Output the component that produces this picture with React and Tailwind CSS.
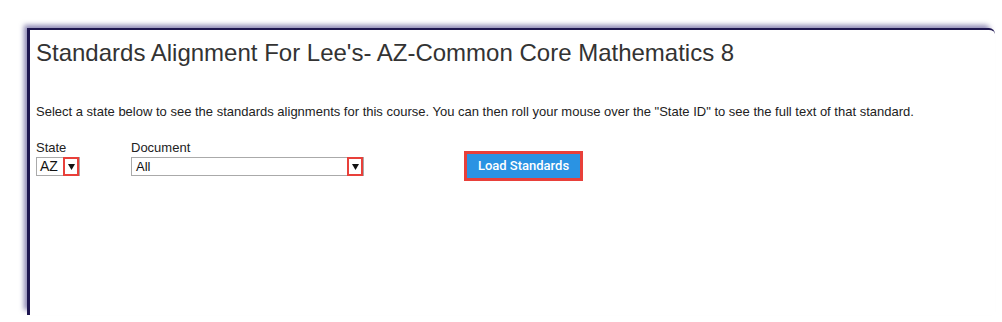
import { useState } from "react";

const Arrow = () => (
  <span className="flex items-center justify-center w-[16px] h-[19px] border-2 border-[#e8403a] bg-white">
    <svg width="7" height="6" viewBox="0 0 7 6">
      <path d="M0 0 H7 L3.5 6 Z" fill="#111" />
    </svg>
  </span>
);

export default function App() {
  const [state] = useState("AZ");
  const [doc] = useState("All");

  return (
    <div className="w-[1002px] h-[322px] bg-white pt-[28px] pl-[27px] overflow-hidden" style={{ fontFamily: '"Liberation Sans", Arial, sans-serif' }}>
      <div className="w-[968px] h-[287px] bg-white border-l-[3px] border-t-[2px] border-[#1e1650] rounded-tr-[6px] shadow-[-4px_-4px_5px_-1px_rgba(50,40,120,0.55)] pl-[6px] pt-[9px]">
        <h1 className="text-[24px] leading-[28px] text-[#333]">
          Standards Alignment For Lee's- AZ-Common Core Mathematics 8
        </h1>
        <p className="mt-[37px] text-[13px] leading-[15px] text-[#222]">
          Select a state below to see the standards alignments for this course. You can then roll your mouse over the "State ID" to see the full text of that standard.
        </p>
        <div className="mt-[21px] flex items-start">
          <div className="flex flex-col w-[95px]">
            <span className="text-[13px] leading-[15px] text-[#222]">State</span>
            <div className="mt-[2px] flex items-center w-[44px] h-[19px] border border-[#aaa] pl-[3px] justify-between">
              <span className="text-[14px] leading-[15px] text-[#111]">{state}</span>
              <Arrow />
            </div>
          </div>
          <div className="flex flex-col">
            <span className="text-[13px] leading-[15px] text-[#222]">Document</span>
            <div className="mt-[2px] flex items-center w-[233px] h-[19px] border border-[#aaa] pl-[4px] justify-between">
              <span className="text-[13px] leading-[15px] text-[#111]">{doc}</span>
              <Arrow />
            </div>
          </div>
          <button className="ml-[100px] mt-[11px] w-[119px] h-[30px] border-[3px] border-[#e8403a] bg-[#2a93e3] text-white text-[13px] font-medium" style={{ fontFamily: 'Roboto, "Liberation Sans", sans-serif' }}>
            Load Standards
          </button>
        </div>
      </div>
    </div>
  );
}
